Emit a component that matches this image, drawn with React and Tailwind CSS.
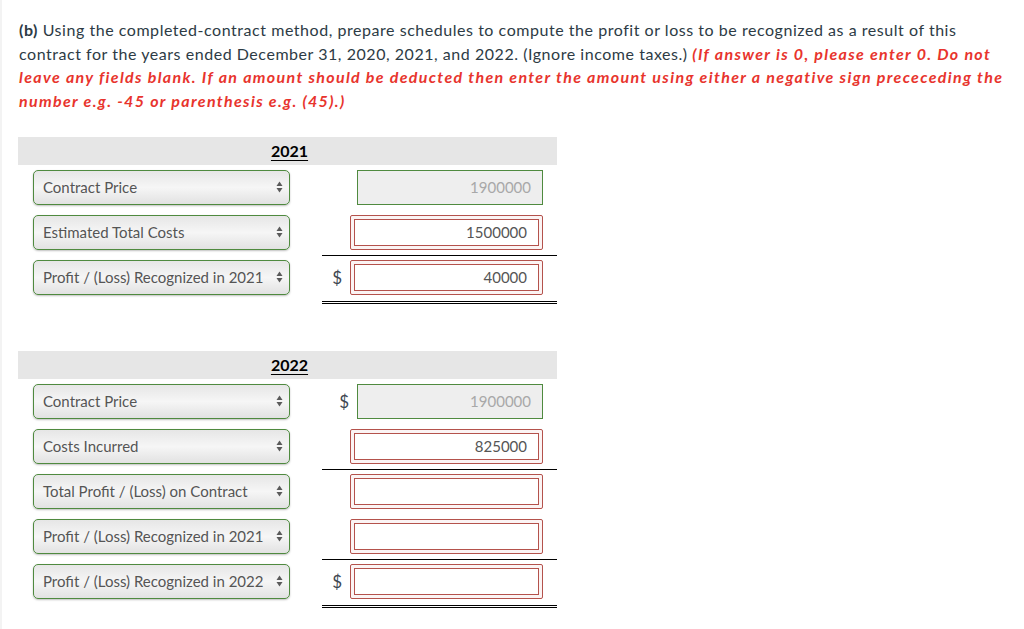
const font = { fontFamily: "Lato, 'Noto Sans', sans-serif" };

function Arrows() {
  return (
    <svg width="7" height="12" viewBox="0 0 7 12" className="shrink-0">
      <path d="M3.5 0.5 L6.5 5 H0.5 Z" fill="#5a5a5a" />
      <path d="M3.5 11.5 L6.5 7 H0.5 Z" fill="#5a5a5a" />
    </svg>
  );
}

function Select({ label }) {
  return (
    <div className="ml-[15px] w-[257px] h-[35px] shrink-0 flex items-center justify-between pl-[9px] pr-[6px] rounded-[5px] border border-[#4f8a3f] bg-gradient-to-b from-[#e6e6e6] via-[#f6f6f6] to-[#e2e2e2] shadow-[0_1px_2px_rgba(0,0,0,0.25)] text-[15px] text-[#555555]">
      <span className="whitespace-nowrap">{label}</span>
      <Arrows />
    </div>
  );
}

function Amount({ row }) {
  if (row.readonly) {
    return (
      <div className="flex items-center h-[35px]">
        <span className="w-[35px] text-right pr-[8px] text-[17px] text-[#3d4650]">
          {row.dollar ? "$" : ""}
        </span>
        <div className="w-[186px] h-[35px] border border-[#4f8a3f] bg-[#eeeeee] flex items-center justify-end pr-[11px] text-[15px] text-[#a8a8a8]">
          {row.value}
        </div>
      </div>
    );
  }
  return (
    <div className="flex items-center h-[35px]">
      <span className="w-[28px] text-right pr-[8px] text-[17px] text-[#3d4650]">
        {row.dollar ? "$" : ""}
      </span>
      <div className="w-[193px] h-[35px] border border-[#b4524c] rounded-[2px] bg-[#fbf4f4] p-[3px]">
        <div className="h-full border border-[#b4524c] bg-white flex items-center justify-end pr-[11px] text-[15px] text-[#555555]">
          {row.value}
        </div>
      </div>
    </div>
  );
}

function Row({ row }) {
  return (
    <div className="flex">
      <Select label={row.label} />
      <div className="ml-[32px] w-[236px] flex flex-col">
        <Amount row={row} />
        {row.line === "single" && (
          <div className="h-[10px] pt-[5px]">
            <div className="h-px bg-black" />
          </div>
        )}
        {row.line === "double" && (
          <div className="pt-[6px]">
            <div className="h-[3px] border-t border-b border-black" />
          </div>
        )}
        {!row.line && <div className="h-[10px]" />}
      </div>
    </div>
  );
}

function Schedule({ year, rows }) {
  return (
    <div className="ml-[16px] w-[539px]">
      <div className="h-[28px] bg-[#e6e6e6] flex items-center justify-center pl-[4px]">
        <span className="text-[16px] font-bold text-black underline underline-offset-[3px] decoration-1">
          {year}
        </span>
      </div>
      <div className="pt-[5px]">
        {rows.map((r) => (
          <Row key={r.label} row={r} />
        ))}
      </div>
    </div>
  );
}

export default function App() {
  const rows2021 = [
    { label: "Contract Price", value: "1900000", readonly: true },
    { label: "Estimated Total Costs", value: "1500000", line: "single" },
    { label: "Profit / (Loss) Recognized in 2021", value: "40000", dollar: true, line: "double" },
  ];
  const rows2022 = [
    { label: "Contract Price", value: "1900000", readonly: true, dollar: true },
    { label: "Costs Incurred", value: "825000", line: "single" },
    { label: "Total Profit / (Loss) on Contract", value: "" },
    { label: "Profit / (Loss) Recognized in 2021", value: "", line: "single" },
    { label: "Profit / (Loss) Recognized in 2022", value: "", dollar: true, line: "double" },
  ];

  return (
    <div style={font} className="min-h-[629px] bg-white border-l-2 border-[#f3f3f3]">
      <p className="pl-[17px] pr-[12px] pt-[18px] text-[16px] leading-[23.7px] tracking-[0.54px] text-[#2d3b45]">
        <span className="font-bold">(b)</span> Using the completed-contract method, prepare schedules to
        compute the profit or loss to be recognized as a result of this contract for the years ended
        December 31, 2020, 2021, and 2022. (Ignore income taxes.){" "}
        <span className="italic font-bold tracking-[1.33px] text-[#e8342d]">
          (If answer is 0, please enter 0. Do not leave any fields blank. If an amount should be
          deducted then enter the amount using either a negative sign prececeding the number e.g. -45
          or parenthesis e.g. (45).)
        </span>
      </p>
      <div className="pt-[24px]">
        <Schedule year="2021" rows={rows2021} />
      </div>
      <div className="pt-[47px]">
        <Schedule year="2022" rows={rows2022} />
      </div>
    </div>
  );
}
